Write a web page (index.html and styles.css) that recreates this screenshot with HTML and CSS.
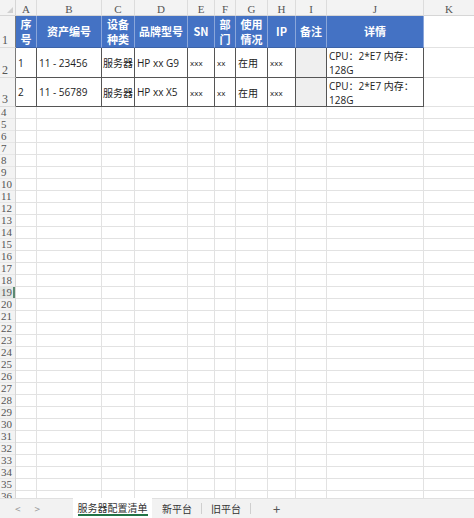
FILE: index.html
```html
<!DOCTYPE html>
<html lang="zh">
<head>
<meta charset="utf-8">
<link rel="stylesheet" href="styles.css">
</head>
<body>
<div class="sheet">
  <div class="top">
    <div class="corner"><span class="tri"></span></div>
    <div class="ch">A</div><div class="ch">B</div><div class="ch">C</div><div class="ch">D</div><div class="ch">E</div><div class="ch">F</div><div class="ch">G</div><div class="ch">H</div><div class="ch">I</div><div class="ch">J</div><div class="ch last">K</div>

    <div class="rh">1</div>
    <div class="hd">序号</div><div class="hd">资产编号</div><div class="hd">设备种类</div><div class="hd">品牌型号</div><div class="hd">SN</div><div class="hd">部门</div><div class="hd">使用情况</div><div class="hd">IP</div><div class="hd">备注</div><div class="hd">详情</div><div class="ek"></div>

    <div class="rh">2</div>
    <div class="td">1</div><div class="td">11 - 23456</div><div class="td cj">服务器</div><div class="td">HP xx G9</div><div class="td sm">xxx</div><div class="td sm">xx</div><div class="td">在用</div><div class="td sm">xxx</div><div class="td note"></div><div class="td wrap">CPU：2*E7 内存：128G</div><div class="ek"></div>

    <div class="rh">3</div>
    <div class="td">2</div><div class="td">11 - 56789</div><div class="td cj">服务器</div><div class="td">HP xx X5</div><div class="td sm">xxx</div><div class="td sm">xx</div><div class="td">在用</div><div class="td sm">xxx</div><div class="td note"></div><div class="td wrap">CPU：2*E7 内存：128G</div><div class="ek"></div>
  </div>

  <div class="rest">
    <div class="nums">
      <div>4</div><div>5</div><div>6</div><div>7</div><div>8</div><div>9</div><div>10</div><div>11</div><div>12</div><div>13</div><div>14</div><div>15</div><div>16</div><div>17</div><div>18</div><div class="act">19</div><div>20</div><div>21</div><div>22</div><div>23</div><div>24</div><div>25</div><div>26</div><div>27</div><div>28</div><div>29</div><div>30</div><div>31</div><div>32</div><div>33</div><div>34</div><div>35</div><div>36</div>
    </div>
    <div class="cols">
      <div></div><div></div><div></div><div></div><div></div><div></div><div></div><div></div><div></div><div></div><div class="lastcol"></div>
    </div>
  </div>
</div>

<div class="tabs">
  <div class="nav"><span>&lt;</span><span>&gt;</span></div>
  <div class="tab active"><span>服务器配置清单</span></div>
  <div class="tab">新平台</div>
  <div class="sep"></div>
  <div class="tab">旧平台</div>
  <div class="sep"></div>
  <div class="plus">+</div>
</div>
</body>
</html>
```

FILE: styles.css
```css
* { box-sizing: border-box; }
html, body {
  margin: 0;
  padding: 0;
  width: 474px;
  height: 518px;
  overflow: hidden;
  background: #fff;
  font-family: "Noto Sans CJK SC", "Noto Sans", sans-serif;
}
.sheet {
  height: 498px;
  overflow: hidden;
}
.top {
  display: grid;
  grid-template-columns: 16px 21px 65px 33px 53px 27px 21px 32px 28px 31px 97px 1fr;
  grid-template-rows: 16px 32px 30px 29px;
}
.corner {
  background: #f3f3f3;
  border-right: 1px solid #d6d6d6;
  border-bottom: 1px solid #d6d6d6;
  position: relative;
}
.tri {
  position: absolute;
  right: 2px;
  bottom: 2px;
  width: 0;
  height: 0;
  border-left: 6px solid transparent;
  border-bottom: 6px solid #d0d0d0;
}
.ch {
  background: #f3f3f3;
  border-right: 1px solid #dcdcdc;
  border-bottom: 1px solid #d6d6d6;
  font-family: "Liberation Serif", serif;
  font-size: 11px;
  color: #555;
  text-align: center;
  line-height: 18px;
}
.ch.last { border-right: none; }
.rh {
  background: #f3f3f3;
  border-right: 1px solid #7a7a7a;
  border-bottom: 1px solid #dcdcdc;
  font-family: "Liberation Serif", serif;
  font-size: 12px;
  color: #555;
  display: flex;
  align-items: flex-end;
  padding-left: 2px;
  line-height: 14px;
}
.hd {
  background: #4472c4;
  color: #fff;
  font-weight: bold;
  font-size: 11px;
  line-height: 15px;
  border-right: 1px solid #8aa6da;
  border-bottom: 1px solid #3c63a8;
  display: flex;
  align-items: center;
  justify-content: center;
  text-align: center;
  padding: 0 1px;
  word-break: break-all;
}
.hd:nth-child(24) { border-right: 1px solid #555; }
.td {
  border-right: 1px solid #555;
  border-bottom: 1px solid #555;
  font-family: "Open Sans", "Noto Sans CJK SC", sans-serif;
  font-size: 10px;
  color: #222;
  display: flex;
  align-items: center;
  padding-left: 2px;
  white-space: nowrap;
  overflow: hidden;
}
.td.cj { padding-left: 1px; font-size: 10px; }
.td.sm { font-size: 8px; }
.td.note { background: #efefef; }
.td.wrap {
  white-space: normal;
  line-height: 14px;
  align-items: flex-start;
  padding-top: 1px;
}
.ek {
  border-bottom: 1px solid #e2e2e2;
}
.rest {
  display: flex;
  height: 391px;
}
.nums {
  width: 16px;
  flex: none;
  background: #f3f3f3;
  border-right: 1px solid #d6d6d6;
}
.nums div {
  height: 12px;
  font-family: "Liberation Serif", serif;
  font-size: 11px;
  line-height: 11px;
  color: #555;
  padding-left: 1px;
  border-bottom: 1px solid #e6e6e6;
  white-space: nowrap;
  overflow: hidden;
}
.nums .act {
  background: #e4e8e5;
  box-shadow: inset -2px 0 0 #5d8a72;
}
.cols {
  flex: 1;
  display: grid;
  grid-template-columns: 21px 65px 33px 53px 27px 21px 32px 28px 31px 97px 1fr;
}
.cols div {
  border-right: 1px solid #e2e2e2;
  background: repeating-linear-gradient(to bottom, transparent 0, transparent 11px, #e2e2e2 11px, #e2e2e2 12px);
}
.cols .lastcol { border-right: none; }
.tabs {
  height: 20px;
  display: flex;
  align-items: stretch;
  background: #f2f2f2;
  border-top: 1px solid #e0e0e0;
  font-size: 10px;
  color: #333;
}
.nav {
  width: 73px;
  display: flex;
  align-items: center;
  gap: 14px;
  padding-left: 15px;
  color: #999;
  font-size: 10px;
}
.tab {
  display: flex;
  align-items: center;
  padding: 0 9px;
}
.tab.active {
  background: #fff;
  width: 79px;
  justify-content: center;
  padding: 0;
  margin-top: -1px;
}
.tab.active span {
  border-bottom: 2px solid #217346;
  line-height: 13px;
  margin-top: 1px;
}
.tab:nth-child(3) { padding-left: 10px; }
.sep {
  width: 1px;
  background: #cfcfcf;
  margin: 4px 0;
}
.plus {
  display: flex;
  align-items: center;
  padding-left: 22px;
  font-size: 13px;
  color: #555;
}
```
